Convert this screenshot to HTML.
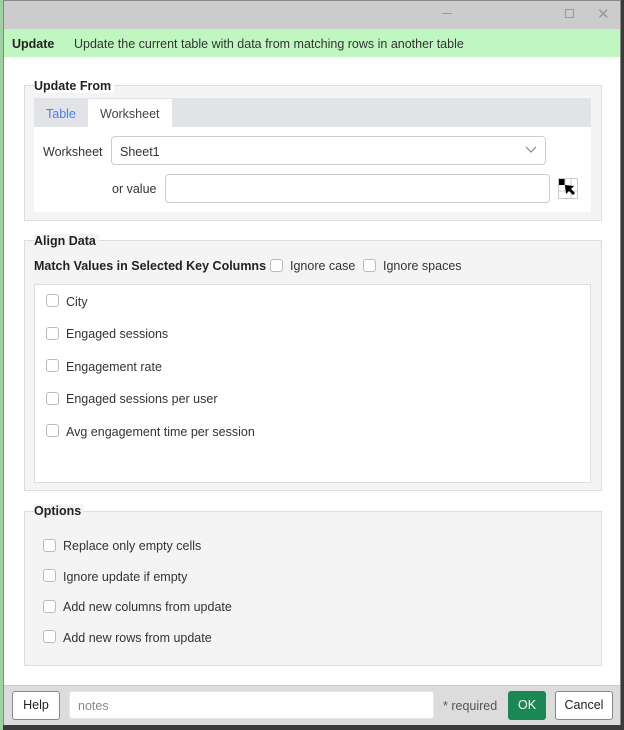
<!DOCTYPE html>
<html><head><meta charset="utf-8"><style>
*{box-sizing:border-box;margin:0;padding:0}
body{width:624px;height:730px;position:relative;overflow:hidden;background:#3a3a3a;font-family:"Liberation Sans",sans-serif;font-size:12.5px;color:#333}
.a{position:absolute}
.win{left:3px;top:0;width:618px;height:725px;background:#fff;border:1px solid #888}
.fs{background:#f4f4f4;border:1px solid #ddd}
.lg{font-weight:bold;color:#222;background:#fff;padding-right:3px}
.cb{width:13px;height:13px;border:1px solid #bbb;border-radius:3px;background:#fff}
.inp{background:#fff;border:1px solid #ccc;border-radius:4px}
.btn{background:#fff;border:1px solid #888;border-radius:3px;text-align:center;line-height:27px;color:#222}
</style></head><body>
<div class="a" style="left:0;top:0;width:3px;height:730px;background:#9fd0a0"></div>
<div class="a win"></div>
<div class="a" style="left:4px;top:1px;width:616px;height:28px;background:#cccccc"></div>
<div class="a" style="left:442px;top:13px;width:10px;height:1px;background:#999"></div>
<div class="a" style="left:565px;top:9px;width:9px;height:9px;border:1px solid #999"></div>
<div class="a" style="left:597px;top:5px;color:#999;font-size:15px">✕</div>
<div class="a" style="left:4px;top:29px;width:616px;height:28px;background:#c0f7c0"></div>
<div class="a" style="left:12px;top:37px;font-weight:bold;color:#222">Update</div>
<div class="a" style="left:74px;top:37px;color:#333">Update the current table with data from matching rows in another table</div>

<div class="a fs" style="left:24px;top:85px;width:578px;height:136px"></div>
<div class="a lg" style="left:34px;top:79px">Update From</div>
<div class="a" style="left:34px;top:98px;width:557px;height:29px;background:#e1e3e6"></div>
<div class="a" style="left:46px;top:107px;color:#4a7ff0">Table</div>
<div class="a" style="left:88px;top:99px;width:84px;height:28px;background:#fff"></div>
<div class="a" style="left:100px;top:107px;color:#444">Worksheet</div>
<div class="a" style="left:34px;top:127px;width:557px;height:85px;background:#fff"></div>
<div class="a" style="left:43px;top:145px">Worksheet</div>
<div class="a inp" style="left:111px;top:136px;width:435px;height:29px"></div>
<div class="a" style="left:120px;top:145px">Sheet1</div>
<svg class="a" style="left:524px;top:145px" width="14" height="10"><path d="M2 2l5 5 5-5" fill="none" stroke="#888" stroke-width="1.2"/></svg>
<div class="a" style="left:112px;top:182px">or value</div>
<div class="a inp" style="left:165px;top:174px;width:385px;height:29px"></div>
<svg class="a" style="left:558px;top:178px" width="20" height="21"><rect x="0.5" y="0.5" width="19" height="20" fill="#fff" stroke="#ccc"/><rect x="1" y="1" width="6" height="6" fill="#000"/><path d="M7 7v4M13 1v19M1 13h18M7 1v6" stroke="#ccc"/><path d="M7 7l9 1-3 3 4 4-2 2-4-4-3 3z" fill="#000"/></svg>

<div class="a fs" style="left:24px;top:240px;width:578px;height:251px"></div>
<div class="a lg" style="left:34px;top:234px;background:#f4f4f4">Align Data</div>
<div class="a" style="left:34px;top:259px;font-weight:bold;color:#222">Match Values in Selected Key Columns</div>
<div class="a cb" style="left:270px;top:259px"></div>
<div class="a" style="left:290px;top:259px">Ignore case</div>
<div class="a cb" style="left:363px;top:259px"></div>
<div class="a" style="left:383px;top:259px">Ignore spaces</div>
<div class="a" style="left:34px;top:284px;width:557px;height:199px;background:#fff;border:1px solid #ddd"></div>
<div class="a cb" style="left:46px;top:294px"></div><div class="a" style="left:66px;top:295px">City</div>
<div class="a cb" style="left:46px;top:327px"></div><div class="a" style="left:66px;top:327px">Engaged sessions</div>
<div class="a cb" style="left:46px;top:359px"></div><div class="a" style="left:66px;top:360px">Engagement rate</div>
<div class="a cb" style="left:46px;top:392px"></div><div class="a" style="left:66px;top:392px">Engaged sessions per user</div>
<div class="a cb" style="left:46px;top:424px"></div><div class="a" style="left:66px;top:425px">Avg engagement time per session</div>

<div class="a fs" style="left:24px;top:511px;width:578px;height:155px"></div>
<div class="a lg" style="left:34px;top:504px;background:#f4f4f4">Options</div>
<div class="a cb" style="left:43px;top:539px"></div><div class="a" style="left:63px;top:539px">Replace only empty cells</div>
<div class="a cb" style="left:43px;top:569px"></div><div class="a" style="left:63px;top:570px">Ignore update if empty</div>
<div class="a cb" style="left:43px;top:600px"></div><div class="a" style="left:63px;top:600px">Add new columns from update</div>
<div class="a cb" style="left:43px;top:630px"></div><div class="a" style="left:63px;top:631px">Add new rows from update</div>

<div class="a" style="left:4px;top:685px;width:616px;height:40px;background:#dcdcdc;border-top:1px solid #c8c8c8"></div>
<div class="a btn" style="left:12px;top:691px;width:48px;height:29px">Help</div>
<div class="a" style="left:69px;top:691px;width:365px;height:28px;background:#fff;border-radius:3px;border:1px solid #e5e5e5"></div>
<div class="a" style="left:78px;top:699px;color:#888">notes</div>
<div class="a" style="left:443px;top:699px;color:#555">* required</div>
<div class="a btn" style="left:508px;top:691px;width:38px;height:29px;background:#1a8754;border-color:#1a8754;color:#fff">OK</div>
<div class="a btn" style="left:555px;top:691px;width:58px;height:29px">Cancel</div>
</body></html>
